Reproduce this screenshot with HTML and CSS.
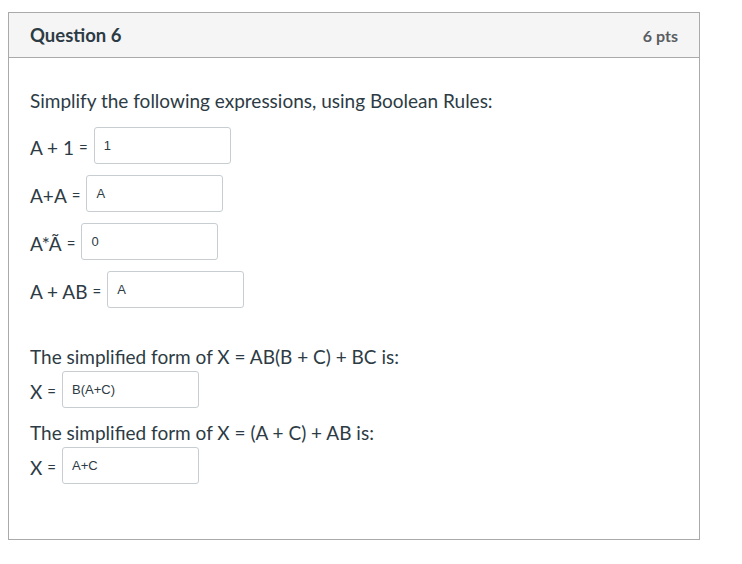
FILE: index.html
```html
<!DOCTYPE html>
<html lang="en">
<head>
    <meta charset="UTF-8">
    <title>Question 6</title>
    <link rel="stylesheet" href="styles.css">
</head>
<body>
    <div class="question">
        <!-- Header -->
        <div class="question-header">
            <span class="question-name">Question 6</span>
            <span class="question-points">6 pts</span>
        </div>

        <!-- Body -->
        <div class="question-text">
            <p class="intro">Simplify the following expressions, using Boolean Rules:</p>

            <div class="answer-row"><span>A + 1</span><span class="eq">=</span><input class="answer" type="text" value="1"></div>
            <div class="answer-row"><span>A+A</span><span class="eq">=</span><input class="answer" type="text" value="A"></div>
            <div class="answer-row"><span>A*Ã</span><span class="eq">=</span><input class="answer" type="text" value="0"></div>
            <div class="answer-row"><span>A + AB</span><span class="eq">=</span><input class="answer" type="text" value="A"></div>

            <p class="prompt first">The simplified form of X = AB(B + C) + BC is:</p>
            <div class="answer-row tight"><span>X</span><span class="eq">=</span><input class="answer" type="text" value="B(A+C)"></div>

            <p class="prompt">The simplified form of X = (A + C) + AB is:</p>
            <div class="answer-row tight"><span>X</span><span class="eq">=</span><input class="answer" type="text" value="A+C"></div>
        </div>
    </div>
</body>
</html>
```

FILE: styles.css
```css
* {
    margin: 0;
    padding: 0;
    box-sizing: border-box;
}

body {
    font-family: Lato, 'Open Sans', sans-serif;
    background-color: #fff;
    color: #2d3b45;
    padding: 12px 8px;
}

/* Question card */
.question {
    width: 692px;
    height: 528px;
    border: 1px solid #aaaaaa;
}

.question-header {
    display: flex;
    justify-content: space-between;
    align-items: center;
    height: 45px;
    padding: 0 21px;
    background-color: #f5f5f5;
    border-bottom: 1px solid #aaaaaa;
}

.question-name {
    font-size: 18.5px;
    font-weight: 700;
}

.question-points {
    font-size: 16px;
    font-weight: 700;
    color: #5a5e62;
}

/* Question body */
.question-text {
    padding: 30px 21px 0;
    font-size: 19px;
}

.intro {
    line-height: 26px;
    margin-bottom: 13px;
}

.answer-row {
    display: flex;
    align-items: center;
    height: 37px;
    margin-bottom: 11px;
    line-height: 1;
}

.answer-row span {
    padding-top: 3px;
}

.answer-row.tight {
    margin-bottom: 0;
}

.eq {
    font-size: 15px;
    margin: 0 6px 0 5px;
}

.prompt {
    line-height: 26px;
    margin-top: 12px;
    margin-bottom: 1px;
}

.prompt.first {
    margin-top: 36px;
}

.answer {
    width: 137px;
    height: 37px;
    padding: 0 9px;
    border: 1px solid #c7cdd1;
    border-radius: 3px;
    font-family: 'Liberation Sans', Arial, sans-serif;
    font-size: 13px;
    color: #2d3b45;
}
```
